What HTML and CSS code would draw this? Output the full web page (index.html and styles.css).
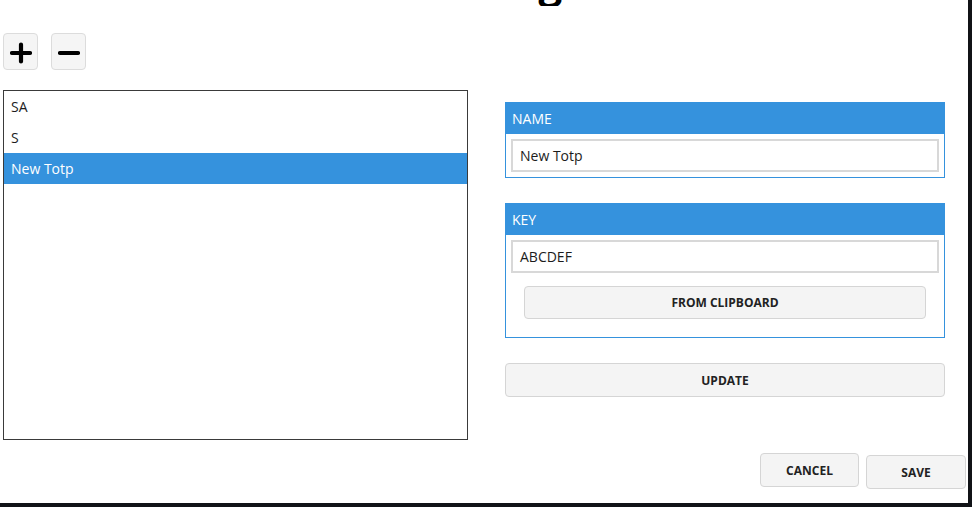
FILE: index.html
```html
<!DOCTYPE html>
<html lang="en">
<head>
<meta charset="utf-8">
<title>Settings</title>
<link rel="stylesheet" href="styles.css">
</head>
<body>
<div class="app">
  <div class="title-clip"><h1 class="title">Settings</h1></div>

  <div class="toolbar">
    <button class="icon-btn" type="button" aria-label="Add">
      <svg width="22" height="22" viewBox="0 0 22 22"><path d="M11 2.5V19.5M2 11H20" stroke="#000" stroke-width="4.2" stroke-linecap="round" fill="none"/></svg>
    </button>
    <button class="icon-btn" type="button" aria-label="Remove">
      <svg width="22" height="22" viewBox="0 0 22 22"><path d="M2 11H20" stroke="#000" stroke-width="4.2" stroke-linecap="round" fill="none"/></svg>
    </button>
  </div>

  <div class="content">
    <ul class="list">
      <li class="item">SA</li>
      <li class="item">S</li>
      <li class="item selected">New Totp</li>
    </ul>

    <div class="editor">
      <section class="group">
        <div class="group-head">NAME</div>
        <div class="group-body">
          <div class="field">New Totp</div>
        </div>
      </section>

      <section class="group key-group">
        <div class="group-head">KEY</div>
        <div class="group-body">
          <div class="field">ABCDEF</div>
          <button class="btn clip-btn" type="button">FROM CLIPBOARD</button>
        </div>
      </section>

      <button class="btn update-btn" type="button">UPDATE</button>
    </div>
  </div>

  <div class="footer">
    <button class="btn foot-btn" type="button">CANCEL</button>
    <button class="btn foot-btn save" type="button">SAVE</button>
  </div>
</div>
</body>
</html>
```

FILE: styles.css
```css
* { box-sizing: border-box; }

html, body { margin: 0; padding: 0; }

body {
  width: 972px;
  height: 507px;
  background: #ffffff;
  font-family: "Open Sans", "Noto Sans", sans-serif;
  font-size: 14px;
  color: #1c1c1c;
  overflow: hidden;
}

.app {
  width: 972px;
  height: 507px;
  border-right: 4px solid #111317;
  border-bottom: 4px solid #111317;
  padding-left: 3px;
  display: flex;
  flex-direction: column;
}

.title-clip {
  height: 6px;
  overflow: hidden;
  display: flex;
  justify-content: center;
  align-items: flex-end;
}

.title {
  margin: 0;
  font-size: 42px;
  font-weight: 700;
  line-height: 42px;
  margin-bottom: 3px;
  color: #000;
  white-space: nowrap;
  padding-left: 26px;
  flex-shrink: 0;
}

.toolbar {
  margin-top: 27px;
  display: flex;
  gap: 13px;
}

.icon-btn {
  width: 35px;
  height: 37px;
  padding: 0;
  margin: 0;
  background: #f5f5f5;
  border: 1px solid #dcdcdc;
  border-radius: 4px;
  display: flex;
  align-items: center;
  justify-content: center;
  padding-top: 2px;
}

.icon-btn svg { display: block; }

.content {
  margin-top: 20px;
  display: flex;
  align-items: flex-start;
}

.list {
  list-style: none;
  margin: 0;
  padding: 0;
  width: 465px;
  height: 350px;
  border: 1px solid #3a3a3a;
  flex-shrink: 0;
}

.item {
  height: 31px;
  line-height: 31px;
  padding-left: 7px;
  color: #1c1c1c;
}

.item.selected {
  background: #3592dd;
  color: #ffffff;
}

.editor {
  margin-left: 37px;
  padding-top: 12px;
  width: 440px;
  display: flex;
  flex-direction: column;
}

.group {
  border: 1px solid #3592dd;
  background: #fff;
}

.key-group { margin-top: 25px; }

.group-head {
  background: #3592dd;
  color: #ffffff;
  margin: -1px -1px 0 -1px;
  padding-left: 7px;
  padding-top: 1px;
  height: 32px;
  line-height: 31px;
}

.group-body {
  padding: 5px;
  display: flex;
  flex-direction: column;
}

.field {
  height: 33px;
  line-height: 29px;
  border: 2px solid #d8d8d8;
  padding-left: 7px;
  color: #1c1c1c;
}

.btn {
  font-family: "Open Sans", "Noto Sans", sans-serif;
  font-weight: 700;
  font-size: 12px;
  color: #222222;
  background: #f4f4f4;
  border: 1px solid #d5d5d5;
  border-radius: 4px;
  margin: 0;
  padding: 0;
  cursor: default;
}

.clip-btn {
  height: 33px;
  margin: 13px;
}

.update-btn {
  margin-top: 25px;
  height: 34px;
}

.footer {
  margin-top: 13px;
  display: flex;
  justify-content: flex-end;
  align-items: flex-start;
  gap: 7px;
  padding-right: 2px;
}

.foot-btn {
  width: 99px;
  height: 34px;
}

.foot-btn.save {
  width: 100px;
  margin-top: 2px;
}
```
